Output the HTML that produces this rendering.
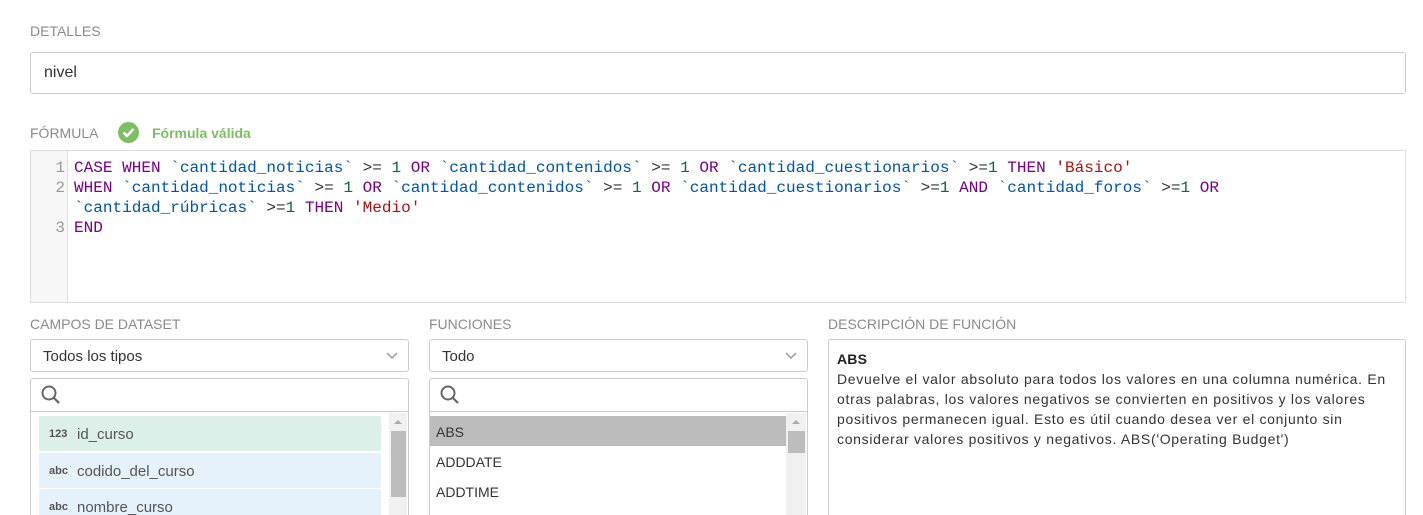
<!DOCTYPE html>
<html style="height:515px;overflow:hidden"><head><meta charset="utf-8"><style>
*{box-sizing:border-box;margin:0;padding:0}
body{width:1423px;height:515px;overflow:hidden;background:#fff;font-family:"Liberation Sans",sans-serif;color:#333;position:relative}
.lbl{position:absolute;font-size:14px;color:#8a8a8a}
.box{position:absolute;border:1px solid #ccc;border-radius:3px;background:#fff}
.cut{border-bottom:none;border-radius:3px 3px 0 0}
.code{position:absolute;left:30px;top:150px;width:1376px;height:153px;border:1px solid #ddd;background:#fff}
.gut{position:absolute;left:0;top:0;width:37px;height:100%;background:#f7f7f7;border-right:1px solid #ddd}
.ln{position:absolute;left:0;width:34px;text-align:right;font:16px/20px "Liberation Mono",monospace;color:#999}
.cl{position:absolute;left:43px;font:16.05px/20px "Liberation Mono",monospace;color:#333;white-space:pre}
.k{color:#708}.f{color:#05a}.n{color:#164}.s{color:#a11}
.sel{font-size:15px;color:#333;padding:8px 12px}
.chev{position:absolute;right:10px;top:8px}
.item{position:absolute;left:8px;width:342px;height:35px;border-radius:2px;font-size:15px;color:#555;line-height:38px;padding-left:38px}
.ic{position:absolute;left:10px;top:-1px;font-size:11px;font-weight:bold;color:#555}
.fi{position:absolute;left:0;width:356px;height:30px;font-size:14px;color:#333;line-height:32px;padding-left:6px}
</style></head><body>
<div class="lbl" style="left:30px;top:23px">DETALLES</div>
<div class="box" style="left:30px;top:52px;width:1376px;height:42px;font-size:16px;padding:11px 13px;color:#333">nivel</div>
<div class="lbl" style="left:30px;top:125px">FÓRMULA</div>
<svg style="position:absolute;left:118px;top:122px" width="21" height="21" viewBox="0 0 21 21"><circle cx="10.5" cy="10.5" r="10.5" fill="#7dbe63"/><path d="M5.5 10.5l3.5 3.5 6.5-7" stroke="#fff" stroke-width="2.6" fill="none"/></svg>
<div style="position:absolute;left:152px;top:125px;font-size:14px;font-weight:bold;color:#7dbe63">Fórmula válida</div>
<div class="code"><div class="gut"></div>
<div class="ln" style="top:7px">1</div><div class="ln" style="top:27px">2</div><div class="ln" style="top:67px">3</div>
<div class="cl" style="top:7px"><span class="k">CASE WHEN</span> <span class="f">`cantidad_noticias`</span> &gt;= <span class="n">1</span> <span class="k">OR</span> <span class="f">`cantidad_contenidos`</span> &gt;= <span class="n">1</span> <span class="k">OR</span> <span class="f">`cantidad_cuestionarios`</span> &gt;=<span class="n">1</span> <span class="k">THEN</span> <span class="s">'Básico'</span></div>
<div class="cl" style="top:27px"><span class="k">WHEN</span> <span class="f">`cantidad_noticias`</span> &gt;= <span class="n">1</span> <span class="k">OR</span> <span class="f">`cantidad_contenidos`</span> &gt;= <span class="n">1</span> <span class="k">OR</span> <span class="f">`cantidad_cuestionarios`</span> &gt;=<span class="n">1</span> <span class="k">AND</span> <span class="f">`cantidad_foros`</span> &gt;=<span class="n">1</span> <span class="k">OR</span></div>
<div class="cl" style="top:47px"><span class="f">`cantidad_rúbricas`</span> &gt;=<span class="n">1</span> <span class="k">THEN</span> <span class="s">'Medio'</span></div>
<div class="cl" style="top:67px"><span class="k">END</span></div>
</div>
<div class="lbl" style="left:30px;top:316px">CAMPOS DE DATASET</div>
<div class="lbl" style="left:429px;top:316px">FUNCIONES</div>
<div class="lbl" style="left:828px;top:316px">DESCRIPCIÓN DE FUNCIÓN</div>
<div class="box sel" style="left:30px;top:339px;width:379px;height:33px">Todos los tipos<svg class="chev" width="12" height="14" viewBox="0 0 12 14"><path d="M1 5l5 5 5-5" stroke="#999" stroke-width="1.5" fill="none"/></svg></div>
<div class="box sel" style="left:429px;top:339px;width:379px;height:33px">Todo<svg class="chev" width="12" height="14" viewBox="0 0 12 14"><path d="M1 5l5 5 5-5" stroke="#999" stroke-width="1.5" fill="none"/></svg></div>
<div class="box cut" style="left:30px;top:378px;width:379px;height:137px;overflow:hidden">
<svg style="position:absolute;left:9px;top:5px" width="22" height="22" viewBox="0 0 22 22"><circle cx="9" cy="9" r="6.5" stroke="#666" stroke-width="2" fill="none"/><path d="M14 14l5 5" stroke="#666" stroke-width="2.2"/></svg>
<div style="position:absolute;left:0;top:32px;width:100%;border-top:1px solid #ccc"></div>
<div class="item" style="top:37px;background:#dcefe8"><span class="ic">123</span>id_curso</div>
<div class="item" style="top:74px;background:#e5f1fb"><span class="ic">abc</span>codido_del_curso</div>
<div class="item" style="top:110px;background:#e5f1fb"><span class="ic">abc</span>nombre_curso</div>
<div style="position:absolute;left:358px;top:34px;width:18px;height:140px;background:#f0f0f0"></div>
<div style="position:absolute;left:360px;top:52px;width:15px;height:66px;background:#bdbdbd"></div>
<svg style="position:absolute;left:361px;top:39px" width="12" height="8"><path d="M2 6l4-4 4 4z" fill="#aaa"/></svg>
</div>
<div class="box cut" style="left:429px;top:378px;width:379px;height:137px;overflow:hidden">
<svg style="position:absolute;left:9px;top:5px" width="22" height="22" viewBox="0 0 22 22"><circle cx="9" cy="9" r="6.5" stroke="#666" stroke-width="2" fill="none"/><path d="M14 14l5 5" stroke="#666" stroke-width="2.2"/></svg>
<div style="position:absolute;left:0;top:32px;width:100%;border-top:1px solid #ccc"></div>
<div class="fi" style="top:37px;background:#bcbcbc">ABS</div>
<div class="fi" style="top:67px">ADDDATE</div>
<div class="fi" style="top:97px">ADDTIME</div>
<div style="position:absolute;left:356px;top:34px;width:20px;height:140px;background:#f0f0f0"></div>
<div style="position:absolute;left:358px;top:52px;width:17px;height:22px;background:#bdbdbd"></div>
<svg style="position:absolute;left:360px;top:39px" width="12" height="8"><path d="M2 6l4-4 4 4z" fill="#aaa"/></svg>
</div>
<div class="box cut" style="left:828px;top:339px;width:578px;height:176px;padding:9px 8px;font-size:14px;line-height:20px;color:#333;letter-spacing:0.7px;white-space:nowrap;overflow:hidden">
<b style="color:#222;letter-spacing:0.2px">ABS</b><br>Devuelve el valor absoluto para todos los valores en una columna numérica. En<br>otras palabras, los valores negativos se convierten en positivos y los valores<br>positivos permanecen igual. Esto es útil cuando desea ver el conjunto sin<br>considerar valores positivos y negativos. ABS('Operating Budget')</div>
</body></html>
